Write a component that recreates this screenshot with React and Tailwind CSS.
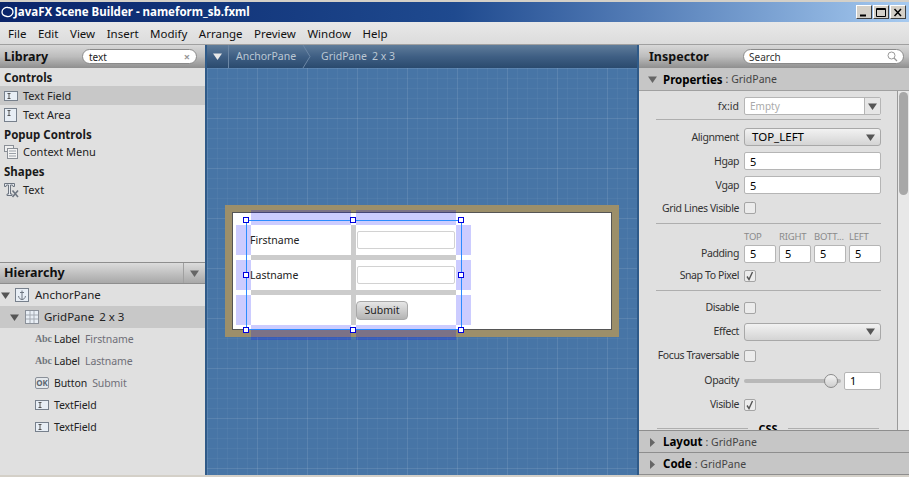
import React from "react";

const Ico = ({ children, w = 16, h = 16, className = "" }) => (
  <svg width={w} height={h} viewBox={`0 0 ${w} ${h}`} className={`shrink-0 ${className}`}>{children}</svg>
);
const TextFieldIcon = () => (
  <Ico w={14} h={10}>
    <rect x="0.5" y="0.5" width="13" height="9" fill="#e8eef5" stroke="#77808c" />
    <path d="M3.5 2.5h3M3.5 7.5h3M5 2.5v5" stroke="#555" fill="none" />
  </Ico>
);
const TextAreaIcon = () => (
  <Ico w={13} h={14}>
    <rect x="0.5" y="0.5" width="12" height="13" fill="#e8eef5" stroke="#77808c" />
    <path d="M3.5 2.5h3M3.5 7.5h3M5 2.5v5" stroke="#555" fill="none" />
  </Ico>
);
const ContextMenuIcon = () => (
  <Ico w={14} h={14}>
    <rect x="0.5" y="0.5" width="9" height="6" fill="#f0f0f0" stroke="#8a8f96" />
    <rect x="3.5" y="3.5" width="10" height="10" fill="#f4f4f4" stroke="#8a8f96" />
    <path d="M5 6h7M5 8.5h7M5 11h7" stroke="#9aa0a8" />
  </Ico>
);
const TextShapeIcon = () => (
  <Ico w={16} h={16}>
    <path d="M0.5 1.5h10v3h-1.5l-.5-1.5h-2v9h1.5v1.5h-5v-1.5h1.5v-9h-2l-.5 1.5h-1.500z" fill="#e6eaf0" stroke="#6d7580" />
    <path d="M8.500 8.500l5.500 6.500M14 8.500l-5.500 6.500" stroke="#6d7580" strokeWidth="1.6" fill="none" />
  </Ico>
);
const AnchorIcon = () => (
  <Ico w={14} h={14}>
    <rect x="0.5" y="0.5" width="13" height="13" fill="#e8eef5" stroke="#77808c" />
    <path d="M7 2.500v9M5 4.500h4M3.500 8c.5 2.500 2 3.500 3.500 3.500s3-1 3.500-3.500" stroke="#6d7580" fill="none" />
  </Ico>
);
const GridIcon = () => (
  <Ico w={14} h={14}>
    <rect x="0.5" y="0.5" width="13" height="13" fill="#e8eef5" stroke="#8a9099" />
    <path d="M5 1v12M9 1v12M1 5h12M1 9h12" stroke="#a4aab2" fill="none" />
  </Ico>
);
const Caret = ({ dir = "down", className = "text-[#555]" }) => (
  <svg width="9" height="9" viewBox="0 0 9 9" className={`shrink-0 ${className}`}>
    {dir === "down" ? <path d="M0 1.500h9L4.500 8z" fill="currentColor" /> : <path d="M2 0v9l5-4.500z" fill="currentColor" />}
  </svg>
);

const Check = ({ checked }) => (
  <div className="w-[12px] h-[12px] rounded-[2px] border border-[#a5a5a5] bg-[#ececec] flex items-center justify-center">
    {checked && (
      <svg width="10" height="10" viewBox="0 0 10 10"><path d="M2 5.500l2 3 3.500-7.500" stroke="#555" strokeWidth="1.4" fill="none" /></svg>
    )}
  </div>
);

const Label = ({ children }) => (
  <div className="w-[100px] mr-[5px] text-right text-[10.5px] tracking-[-0.4px] leading-none text-[#333] whitespace-nowrap">{children}</div>
);
const Row = ({ label, children, className = "" }) => (
  <div className={`flex items-center ${className}`}>
    <Label>{label}</Label>
    {children}
  </div>
);
const Input = ({ v, className = "w-[137px]" }) => (
  <div className={`h-[18px] ${className} bg-white border border-[#b5b5b5] rounded-[2px] pl-[5px] flex items-center text-[11px] text-black leading-none`}>{v}</div>
);
const Sep = ({ className = "" }) => <div className={`ml-[17px] w-[225px] h-px bg-[#aeaeae] ${className}`} />;
const Combo = ({ v }) => (
  <div className="w-[137px] h-[18px] rounded-[3px] border border-[#a8a8a8] bg-gradient-to-b from-[#f2f2f2] to-[#d4d4d4] flex items-center pl-[7px] pr-[5px] text-[11.5px] text-black leading-none">
    <span className="flex-1">{v}</span>
    <Caret className="text-[#555]" />
  </div>
);

const Header = ({ children }) => (
  <div className="h-[23px] shrink-0 bg-gradient-to-b from-[#d8d8d8] via-[#bdbdbd] to-[#8f8f8f] flex items-center">{children}</div>
);

const LibItem = ({ icon, text, sel }) => (
  <div className={`h-[19px] flex items-center pl-[4px] text-[11px] text-[#222] leading-none ${sel ? "bg-[#c8c8c8]" : ""}`}>
    <span className="w-[19px] flex items-center">{icon}</span>
    <span>{text}</span>
  </div>
);
const LibHead = ({ children, className = "" }) => (
  <div className={`pl-[4px] flex items-center font-bold text-[11.5px] text-[#1a1a1a] leading-none ${className}`}>{children}</div>
);
const AbcIcon = () => <span className="w-[16px] font-['Liberation_Serif',serif] font-bold text-[10px] text-[#70757c] leading-none whitespace-nowrap">Abc</span>;
const OkIcon = () => (
  <span className="w-[14px] h-[12px] rounded-[2px] bg-[#e4e8ec] border border-[#8a9099] text-[8px] font-bold text-[#5c6670] flex items-center justify-center leading-none">OK</span>
);
const TreeItem = ({ icon, a, b }) => (
  <div className="h-[22px] flex items-center pl-[35px] text-[10.5px] tracking-[-0.1px] leading-none whitespace-nowrap">
    <span className="w-[19px] flex items-center">{icon}</span>
    <span className="text-[#222]">{a}</span>
    {b && <span className="ml-[5px] text-[#6f6f78]">{b}</span>}
  </div>
);

const Handle = ({ className }) => <div className={`absolute w-[6px] h-[6px] bg-white border-[1.5px] border-[#0000e0] ${className}`} />;
const Band = ({ className = "" }) => <div className={`bg-[#0000ff]/20 ${className}`} />;
const Cell = ({ children, className = "" }) => <div className={`flex items-center ${className}`}>{children}</div>;
const Field = () => <div className="w-[98px] h-[18px] ml-[1px] bg-white border border-[#d2d2d2] rounded-[2px]" />;

const SectionBar = ({ title, sub, open, className = "h-[22px]" }) => (
  <div className={`shrink-0 bg-[#c6c6c6] flex items-center pl-[9px] pt-[1px] leading-none ${className}`}>
    <Caret dir={open ? "down" : "right"} className="text-[#666]" />
    <span className="ml-[6px] font-bold text-[11.5px] text-black">{title}</span>
    <span className="ml-[3px] text-[10.5px] text-[#444]">: {sub}</span>
  </div>
);

export default function App() {
  return (
    <div className="w-[909px] h-[477px] overflow-hidden bg-[#d4d0c8] font-['Noto_Sans',sans-serif] flex flex-col pt-[2px] pb-[2px]">
      {/* title bar */}
      <div className="h-[20px] shrink-0 bg-gradient-to-r from-[#0a246a] via-[#1f4a8f] to-[#a6caf0] flex items-center pl-[1px] pr-[3px] text-white">
        <svg width="13" height="12" viewBox="0 0 13 12" className="shrink-0"><path d="M1 6c0-3 3-5 6-4.500 2.500.2 5 1.800 5 4.500s-3 5-6 4.500C3 10 1 8.500 1 6z" fill="none" stroke="#fff" strokeWidth="1.3" /></svg>
        <span className="ml-[0px] font-bold text-[11.5px] leading-none whitespace-nowrap flex-1">JavaFX Scene Builder - nameform_sb.fxml</span>
        {["min", "max", "close"].map((k) => (
          <div key={k} className="w-[16px] h-[14px] ml-[1px] first:ml-0 bg-[#d4d0c8] border border-t-white border-l-white border-r-[#404040] border-b-[#404040] flex items-center justify-center">
            <svg width="10" height="9" viewBox="0 0 10 9">
              {k === "min" && <path d="M1 7.500h6" stroke="#000" strokeWidth="2" />}
              {k === "max" && <path d="M.5.500h9v8h-9zM.5 1.500h9" stroke="#000" fill="none" />}
              {k === "close" && <path d="M1.500 1l6.500 7M8 1L1.500 8" stroke="#000" strokeWidth="1.500" />}
            </svg>
          </div>
        ))}
      </div>
      {/* menu */}
      <div className="h-[23px] shrink-0 bg-gradient-to-b from-[#e8e8e8] to-[#dcdcdc] border-b border-[#a0a0a0] flex items-center pl-[8px] pt-[1px] gap-[11.5px] text-[11.5px] text-[#111] leading-none">
        {["File", "Edit", "View", "Insert", "Modify", "Arrange", "Preview", "Window", "Help"].map((m) => (
          <span key={m}>{m}</span>
        ))}
      </div>
      {/* main */}
      <div className="flex-1 flex min-h-0">
        {/* left */}
        <div className="w-[205px] shrink-0 bg-[#e0e0e0] flex flex-col">
          <Header>
            <span className="pl-[4px] pt-[2px] w-[82px] font-bold text-[12.5px] text-[#111]">Library</span>
            <div className="w-[115px] h-[15px] rounded-full bg-white border border-[#8a8a8a] flex items-center pl-[6px] pr-[6px] text-[10px] text-[#222] leading-none">
              <span className="flex-1">text</span>
              <span className="text-[11px] text-[#999] font-bold">×</span>
            </div>
          </Header>
          <div className="h-[194px] shrink-0 pt-[1px]">
            <LibHead className="h-[17px]">Controls</LibHead>
            <LibItem icon={<TextFieldIcon />} text="Text Field" sel />
            <LibItem icon={<TextAreaIcon />} text="Text Area" />
            <LibHead className="h-[18px] pt-[4px]">Popup Controls</LibHead>
            <LibItem icon={<ContextMenuIcon />} text="Context Menu" />
            <LibHead className="h-[19px] pt-[3px]">Shapes</LibHead>
            <LibItem icon={<TextShapeIcon />} text="Text" />
          </div>
          <div className="h-[22px] shrink-0 bg-gradient-to-b from-[#dcdcdc] to-[#a8a8a8] border-t border-b border-[#8e8e8e] flex items-center">
            <span className="pl-[4px] pt-[1px] flex-1 font-bold text-[12.5px] text-[#111]">Hierarchy</span>
            <div className="w-[22px] h-full border-l border-[#a0a0a0] flex items-center justify-center"><Caret className="text-[#666]" /></div>
          </div>
          <div className="h-[22px] flex items-center pl-[1px] text-[11.5px] text-[#222] leading-none">
            <Caret className="text-[#555]" />
            <span className="ml-[5px] w-[20px] flex"><AnchorIcon /></span>
            <span>AnchorPane</span>
          </div>
          <div className="h-[22px] flex items-center pl-[10px] bg-[#c8c8c8] text-[11.5px] text-[#222] leading-none">
            <Caret className="text-[#555]" />
            <span className="ml-[6px] w-[19px] flex"><GridIcon /></span>
            <span>GridPane</span>
            <span className="ml-[5px]">2 x 3</span>
          </div>
          <TreeItem icon={<AbcIcon />} a="Label" b="Firstname" />
          <TreeItem icon={<AbcIcon />} a="Label" b="Lastname" />
          <TreeItem icon={<OkIcon />} a="Button" b="Submit" />
          <TreeItem icon={<TextFieldIcon />} a="TextField" />
          <TreeItem icon={<TextFieldIcon />} a="TextField" />
        </div>

        {/* center */}
        <div className="flex-1 min-w-0 flex flex-col border-x-2 border-[#2f5a88]">
          <div className="h-[23px] shrink-0 bg-gradient-to-b from-[#5f7c9a] via-[#3f5f84] to-[#2a4a6e] flex items-center text-[10.5px] text-[#bcc8d4] leading-none">
            <div className="w-[22px] h-full flex items-center justify-center border-r border-[#6c87a5]"><Caret className="text-[#e8e8e8]" /></div>
            <span className="ml-[7px]">AnchorPane</span>
            <svg width="10" height="23" viewBox="0 0 10 23" className="ml-[6px]"><path d="M1 0l7 11.500L1 23" stroke="#6c87a5" fill="none" /></svg>
            <span className="ml-[9px]">GridPane</span>
            <span className="ml-[5px]">2 x 3</span>
          </div>
          <div className="flex-1 min-h-0 pl-[18px] pt-[137px] bg-[#4775a6] bg-[linear-gradient(rgba(255,255,255,0.07)_1px,transparent_1px),linear-gradient(90deg,rgba(255,255,255,0.07)_1px,transparent_1px),linear-gradient(rgba(255,255,255,0.04)_1px,transparent_1px),linear-gradient(90deg,rgba(255,255,255,0.04)_1px,transparent_1px)] bg-[length:50px_50px,50px_50px,10px_10px,10px_10px]">
            {/* edited scene */}
            <div className="relative w-[394px] h-[132px] bg-[#9c8f6a] p-[7px]">
              <div className="w-[380px] h-[118px] bg-white border border-[#555]" />
              {/* grid pane overlay */}
              <div className="absolute left-[11px] top-[5px] w-[235px] h-[130px] grid grid-cols-[15px_100px_5px_100px_15px] grid-rows-[15px_30px_5px_30px_5px_30px_15px]">
                <div />
                <Band />
                <div />
                <Band />
                <div />
                <Band />
                <Cell className="text-[10.5px] text-[#222] leading-none -ml-px">Firstname</Cell>
                <div className="bg-[#cccccc]" />
                <Cell><Field /></Cell>
                <Band />
                <div />
                <div className="bg-[#cccccc]" />
                <div className="bg-[#cccccc]" />
                <div className="bg-[#cccccc]" />
                <div />
                <Band />
                <Cell className="text-[10.5px] text-[#222] leading-none -ml-px">Lastname</Cell>
                <div className="bg-[#cccccc]" />
                <Cell><Field /></Cell>
                <Band />
                <div />
                <div className="bg-[#cccccc]" />
                <div className="bg-[#cccccc]" />
                <div className="bg-[#cccccc]" />
                <div />
                <Band />
                <div />
                <div className="bg-[#cccccc]" />
                <Cell>
                  <div className="h-[19px] w-[52px] rounded-[4px] border border-[#a8a8a8] bg-gradient-to-b from-[#e6e6e6] to-[#b4b4b4] flex items-center justify-center text-[10.5px] text-[#222] leading-none">Submit</div>
                </Cell>
                <Band />
                <div />
                <Band />
                <div />
                <Band />
                <div />
              </div>
              {/* selection */}
              <div className="absolute left-[21px] top-[15px] w-[216px] h-[110px] border border-[#2b8cff]" />
              <Handle className="left-[18px] top-[12px]" />
              <Handle className="left-[125px] top-[12px]" />
              <Handle className="left-[233px] top-[12px]" />
              <Handle className="left-[18px] top-[67px]" />
              <Handle className="left-[233px] top-[67px]" />
              <Handle className="left-[18px] top-[122px]" />
              <Handle className="left-[125px] top-[122px]" />
              <Handle className="left-[233px] top-[122px]" />
            </div>
          </div>
        </div>

        {/* right */}
        <div className="w-[270px] shrink-0 bg-[#e0e0e0] flex flex-col">
          <Header>
            <span className="pl-[10px] pt-[2px] w-[104px] font-bold text-[12.5px] text-[#111]">Inspector</span>
            <div className="w-[161px] h-[15px] rounded-full bg-white border border-[#8a8a8a] flex items-center pl-[5px] pr-[5px] text-[10px] text-[#333] leading-none">
              <span className="flex-1">Search</span>
              <svg width="11" height="11" viewBox="0 0 11 11"><circle cx="4.500" cy="4.500" r="3.500" stroke="#999" fill="none" /><path d="M7 7l3 3" stroke="#999" strokeWidth="1.300" /></svg>
            </div>
          </Header>
          <SectionBar title="Properties" sub="GridPane" open />
          <div className="flex-1 min-h-0 flex overflow-hidden border-t border-[#a0a0a0]">
            <div className="w-[258px] shrink-0 overflow-hidden">
              <Row label={<span className="tracking-normal">fx:id</span>} className="mt-[6px]">
                <div className="w-[137px] h-[18px] flex border border-[#b5b5b5] rounded-[2px] bg-white text-[10px] text-[#aaa] leading-none">
                  <span className="flex-1 pl-[5px] self-center">Empty</span>
                  <div className="w-[16px] border-l border-[#b5b5b5] bg-[#e6e6e6] flex items-center justify-center"><Caret /></div>
                </div>
              </Row>
              <Sep className="mt-[4px]" />
              <Row label="Alignment" className="mt-[8px]"><Combo v="TOP_LEFT" /></Row>
              <Row label="Hgap" className="mt-[6px]"><Input v="5" /></Row>
              <Row label="Vgap" className="mt-[6px]"><Input v="5" /></Row>
              <Row label="Grid Lines Visible" className="mt-[8px]"><Check /></Row>
              <Sep className="mt-[9px]" />
              <div className="mt-[8px] ml-[105px] flex gap-[3px] text-[9.5px] tracking-[-0.2px] text-[#8a8a8a] leading-none">
                <span className="w-[32px]">TOP</span>
                <span className="w-[32px]">RIGHT</span>
                <span className="w-[32px] whitespace-nowrap">BOTT...</span>
                <span className="w-[32px]">LEFT</span>
              </div>
              <Row label="Padding" className="mt-[3px]">
                <div className="flex gap-[3px]">
                  {[0, 1, 2, 3].map((i) => <Input key={i} v="5" className="w-[32px]" />)}
                </div>
              </Row>
              <Row label="Snap To Pixel" className="mt-[7px]"><Check checked /></Row>
              <Sep className="mt-[8px]" />
              <Row label="Disable" className="mt-[11px]"><Check /></Row>
              <Row label="Effect" className="mt-[9px]"><Combo v="" /></Row>
              <Row label="Focus Traversable" className="mt-[9px]"><Check /></Row>
              <Row label="Opacity" className="mt-[10px]">
                <div className="relative w-[97px] h-[18px] flex items-center">
                  <div className="w-full h-[4px] rounded-full bg-[#b8b8b8]" />
                  <div className="absolute right-[3px] w-[14px] h-[14px] rounded-full border border-[#8a8a8a] bg-gradient-to-b from-[#f4f4f4] to-[#cfcfcf]" />
                </div>
                <Input v="1" className="w-[37px] ml-[3px]" />
              </Row>
              <Row label="Visible" className="mt-[9px]"><Check checked /></Row>
              <div className="mt-[12px] ml-[18px] w-[222px] flex items-center gap-[10px]">
                <div className="flex-1 h-px bg-[#aeaeae]" />
                <span className="font-bold text-[11px] text-black leading-none">CSS</span>
                <div className="flex-1 h-px bg-[#aeaeae]" />
              </div>
            </div>
            <div className="w-[12px] shrink-0 bg-[#e8e8e8] border-l border-[#9a9a9a] pt-[1px] pl-[1px]">
              <div className="w-[9px] h-[103px] rounded-full bg-[#a8a8a8]" />
            </div>
          </div>
          <SectionBar title="Layout" sub="GridPane" className="h-[22px] border-t border-[#8e8e8e]" />
          <SectionBar title="Code" sub="GridPane" className="h-[23px] border-t border-b border-[#8e8e8e]" />
        </div>
      </div>
    </div>
  );
}
